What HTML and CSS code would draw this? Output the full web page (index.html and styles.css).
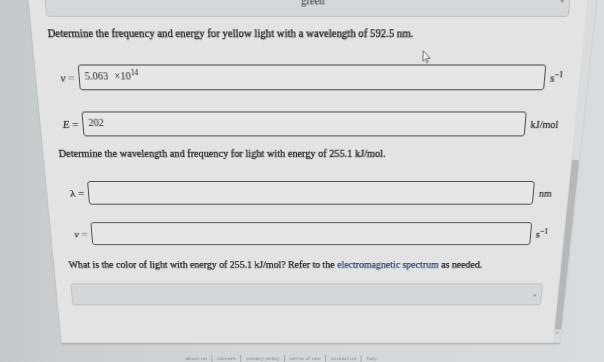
FILE: index.html
```html
<!DOCTYPE html>
<html lang="en">
<head>
<meta charset="utf-8">
<title>Question</title>
<link rel="stylesheet" href="styles.css">
</head>
<body>
<div class="stage">
  <div class="card">
    <div class="content">
      <div class="select select-top"><span class="select-value">green</span><span class="caret">&#9662;</span></div>

      <p class="prompt p1">Determine the frequency and energy for yellow light with a wavelength of 592.5 nm.</p>

      <div class="row row-nu1">
        <span class="label"><i class="sym">ν</i><span class="eq">=</span></span>
        <div class="field"><span class="val">5.063</span><span class="times">×10<sup>14</sup></span></div>
        <span class="unit">s<sup>−1</sup></span>
      </div>

      <div class="row row-e">
        <span class="label"><i class="sym dark">E</i><span class="eq dark">=</span></span>
        <div class="field"><span class="val">202</span></div>
        <span class="unit">kJ/mol</span>
      </div>

      <p class="prompt p2">Determine the wavelength and frequency for light with energy of 255.1 kJ/mol.</p>

      <div class="row row-lambda">
        <span class="label"><span class="sym dark">λ</span><span class="eq dark">=</span></span>
        <div class="field"></div>
        <span class="unit">nm</span>
      </div>

      <div class="row row-nu2">
        <span class="label"><i class="sym">ν</i><span class="eq">=</span></span>
        <div class="field"></div>
        <span class="unit">s<sup>−1</sup></span>
      </div>

      <p class="prompt p3">What is the color of light with energy of 255.1 kJ/mol? Refer to the <span class="link">electromagnetic spectrum</span> as needed.</p>

      <div class="select select-bottom"><span class="select-value"></span><span class="caret">&#9662;</span></div>
    </div>
    <div class="scrollbar"><div class="thumb"></div><span class="arrow">&#709;</span></div>
  </div>

  <div class="footer">
    <span class="flink">about us</span>
    <span class="flink">careers</span>
    <span class="flink">privacy policy</span>
    <span class="flink">terms of use</span>
    <span class="flink">contact us</span>
    <span class="flink">help</span>
  </div>

  <svg class="cursor" width="8" height="12" viewBox="0 0 8 12" aria-hidden="true">
    <path d="M0.5 0.5 L0.5 10 L2.8 7.9 L4.4 11.3 L5.8 10.7 L4.3 7.4 L7.3 7.4 Z" fill="#f4f5f6" stroke="#5a5e62" stroke-width="0.8" stroke-linejoin="round"/>
  </svg>
</div>
</body>
</html>
```

FILE: styles.css
```css
html, body {
  margin: 0;
  padding: 0;
  height: 100%;
  overflow: hidden;
}

html {
  background: linear-gradient(90deg, #c2c7ca 0%, #c9cdd0 8%, #d3d6d8 40%, #d9dcde 100%);
}

body {
  font-family: "Liberation Serif", "Times New Roman", serif;
  color: #222;
}

.stage {
  position: relative;
  display: flow-root;
  width: 604px;
  transform-origin: 300px 180px;
  transform: perspective(200px) rotateX(-4.35deg);
}

.card {
  margin-top: -10px;
  margin-left: 46px;
  width: 531px;
  box-sizing: border-box;
  padding-left: 15px;
  display: flex;
  background: #e1e3e4;
  box-shadow: 0 1px 0 #a9adb0, 0 2px 2px rgba(0, 0, 0, 0.12);
}

.content {
  flex: 1;
  margin-right: 16px;
  padding-top: 11px;
  padding-bottom: 42px;
}

.select {
  height: 25px;
  box-sizing: border-box;
  border: 1px solid #bcc0c3;
  border-radius: 3px;
  background: #d4d8da;
  display: flex;
  align-items: center;
  font-family: "Liberation Serif", serif;
  font-size: 10px;
  color: #333;
}

.select-top {
  padding-bottom: 5px;
}

.select-bottom {
  height: 24px;
  margin-top: 13px;
  background: #d3d7d9;
}

.select-value {
  flex: 1;
  text-align: center;
  padding-left: 18px;
}

.caret {
  font-size: 6px;
  color: #8a8e91;
  margin-right: 5px;
}

.prompt {
  margin: 0;
  font-size: 10.2px;
  line-height: 14px;
  color: #161616;
  -webkit-text-stroke: 0.25px #161616;
  white-space: nowrap;
}

.p1 { margin-top: 8px; }
.p2 { margin-top: 10px; }
.p3 { margin-top: 14px; }

.link {
  color: #2e3f6e;
  -webkit-text-stroke-color: #2e3f6e;
}

.row {
  display: flex;
  align-items: center;
  height: 24px;
}

.row-nu1 { margin-top: 21px; }
.row-e { margin-top: 20px; }
.row-lambda { margin-top: 20px; }
.row-nu2 { margin-top: 18px; }

.label {
  width: 22px;
  margin-right: 4px;
  display: flex;
  justify-content: flex-end;
  align-items: baseline;
  gap: 3px;
  font-size: 10.5px;
  white-space: nowrap;
  -webkit-text-stroke: 0.2px currentColor;
}

.sym { color: #333; }
.eq { color: #777; }
.dark { color: #222; }

.field {
  flex: 1;
  align-self: stretch;
  box-sizing: border-box;
  border: 1px solid #4c5155;
  border-radius: 3px;
  background: #e4e6e7;
  display: flex;
  align-items: center;
  padding: 0 0 4px 5px;
  font-size: 10px;
  color: #2a2a2a;
}

.val { margin-right: 6px; }

.times sup,
.unit sup {
  font-size: 7.5px;
  vertical-align: 4px;
  line-height: 0;
}

.unit {
  margin-left: 5px;
  font-size: 10px;
  color: #2a2a2a;
  white-space: nowrap;
  -webkit-text-stroke: 0.2px #2a2a2a;
}

.scrollbar {
  width: 8px;
  background: #d9dcde;
  display: flex;
  flex-direction: column;
  align-items: center;
}

.thumb {
  margin-top: 170px;
  width: 7px;
  height: 179px;
  background: #b4b8ba;
}

.arrow {
  font-size: 7px;
  line-height: 6px;
  color: #666;
  margin-top: 1px;
}

.footer {
  margin-top: 14px;
  margin-left: 172px;
  display: flex;
  height: 8px;
  align-items: center;
  font-family: "Liberation Sans", Arial, sans-serif;
  font-size: 6px;
  color: #8b8f92;
}

.flink {
  padding: 0 5px;
  line-height: 8px;
}

.flink + .flink {
  border-left: 1px solid #a3a7aa;
}

.cursor {
  position: absolute;
  left: 417px;
  top: 56px;
}
```
